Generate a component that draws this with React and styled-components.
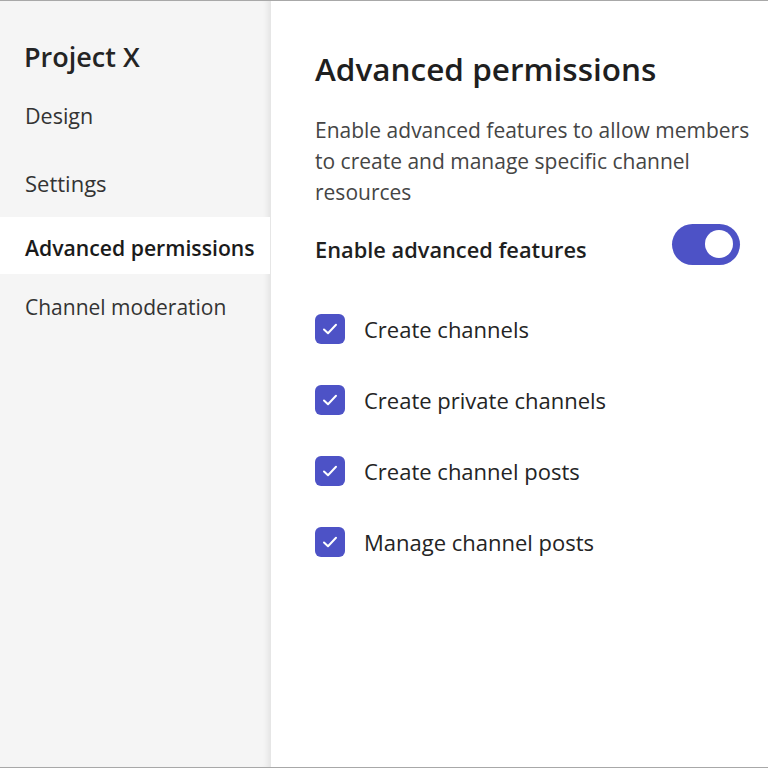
import React from "react";
import styled, { createGlobalStyle } from "styled-components";

const Global = createGlobalStyle`
  html, body { margin: 0; padding: 0; background: #fff; }
  body { font-family: "Open Sans", "Noto Sans", sans-serif; }
  * { box-sizing: border-box; }
`;

const Frame = styled.div`
  width: 768px;
  height: 768px;
  display: flex;
  border-top: 1px solid #a8a8a8;
  border-bottom: 1px solid #a8a8a8;
  overflow: hidden;
`;

const Sidebar = styled.nav`
  width: 271px;
  flex-shrink: 0;
  background: #f5f5f5;
  box-shadow: inset -6px 0 6px -4px rgba(0, 0, 0, 0.08);
  border-right: 1px solid #e6e6e6;
  display: flex;
  flex-direction: column;
  padding-top: 36px;
`;

const ProjectTitle = styled.div`
  font-size: 27px;
  font-weight: 600;
  color: #242424;
  padding: 0 24px;
  height: 40px;
  line-height: 40px;
  margin-bottom: 5px;
  white-space: nowrap;
`;

const NavItem = styled.div`
  padding: ${(p) => (p.$active ? "4px" : "0")} 25px 0;
  height: ${(p) => p.$h}px;
  display: flex;
  align-items: center;
  white-space: nowrap;
  font-size: ${(p) => p.$size}px;
  font-weight: ${(p) => (p.$active ? 600 : 400)};
  color: ${(p) => (p.$active ? "#1a1a1a" : "#333")};
  background: ${(p) => (p.$active ? "#ffffff" : "transparent")};
`;

const Main = styled.main`
  flex: 1;
  background: #fff;
  padding: 46px 10px 0 44px;
  display: flex;
  flex-direction: column;
`;

const Heading = styled.h1`
  margin: 0;
  font-size: 31.5px;
  font-weight: 600;
  color: #1f1f1f;
  line-height: 44px;
  white-space: nowrap;
`;

const Description = styled.p`
  margin: 24px 0 0;
  font-size: 21px;
  line-height: 31px;
  color: #454545;
`;

const ToggleRow = styled.div`
  margin-top: 14px;
  margin-right: 18px;
  display: flex;
  align-items: center;
  justify-content: space-between;
  height: 44px;
`;

const ToggleLabel = styled.span`
  font-size: 21.8px;
  font-weight: 600;
  color: #1f1f1f;
  margin-top: 10px;
`;

const Toggle = styled.div`
  width: 68px;
  height: 41px;
  border-radius: 21px;
  background: #4d52c6;
  display: flex;
  align-items: center;
  justify-content: flex-end;
  padding-right: 7px;
`;

const Knob = styled.div`
  width: 28px;
  height: 28px;
  border-radius: 50%;
  background: #fff;
`;

const List = styled.div`
  margin-top: 48px;
  display: flex;
  flex-direction: column;
  gap: 41px;
`;

const CheckRow = styled.label`
  display: flex;
  align-items: center;
  gap: 19px;
  height: 30px;
`;

const Box = styled.span`
  width: 30px;
  height: 30px;
  border-radius: 6px;
  background: #4d52c6;
  display: flex;
  align-items: center;
  justify-content: center;
`;

const CheckLabel = styled.span`
  font-size: 22px;
  color: #242424;
`;

const Check = () => (
  <svg width="20" height="20" viewBox="0 0 20 20" fill="none">
    <path d="M4 10.5 L8 14.2 L16 5.8" stroke="#fff" strokeWidth="2" strokeLinecap="round" strokeLinejoin="round" />
  </svg>
);

const items = [
  "Create channels",
  "Create private channels",
  "Create channel posts",
  "Manage channel posts",
];

export default function App() {
  return (
    <>
      <Global />
      <Frame>
        <Sidebar>
          <ProjectTitle>Project X</ProjectTitle>
          <NavItem $h={66} $size={21.5}>Design</NavItem>
          <NavItem $h={69} $size={22}>Settings</NavItem>
          <NavItem $h={57} $size={21.2} $active>Advanced permissions</NavItem>
          <NavItem $h={66} $size={21}>Channel moderation</NavItem>
        </Sidebar>
        <Main>
          <Heading>Advanced permissions</Heading>
          <Description>
            Enable advanced features to allow members to create and manage specific channel resources
          </Description>
          <ToggleRow>
            <ToggleLabel>Enable advanced features</ToggleLabel>
            <Toggle><Knob /></Toggle>
          </ToggleRow>
          <List>
            {items.map((t) => (
              <CheckRow key={t}>
                <Box><Check /></Box>
                <CheckLabel>{t}</CheckLabel>
              </CheckRow>
            ))}
          </List>
        </Main>
      </Frame>
    </>
  );
}
